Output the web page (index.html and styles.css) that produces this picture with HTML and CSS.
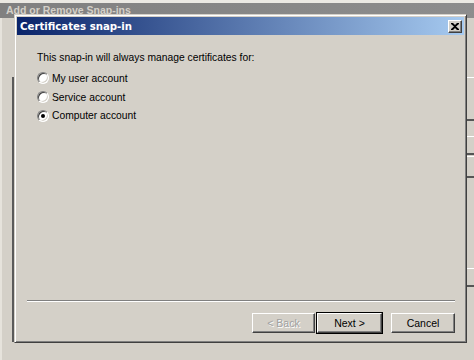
FILE: index.html
```html
<!DOCTYPE html>
<html lang="en">
<head>
    <meta charset="UTF-8">
    <meta name="viewport" content="width=device-width, initial-scale=1.0">
    <title>Certificates snap-in</title>
    <link rel="stylesheet" href="styles.css">
</head>
<body>
    <div class="desktop">
        <!-- Background window, mostly hidden behind the dialog -->
        <div class="outer-window">
            <div class="outer-title">Add or Remove Snap-ins</div>
            <div class="outer-body">
                <div class="outer-list"></div>
                <div class="outer-side">
                    <div class="side-btn side-btn-1"></div>
                    <div class="side-btn side-btn-2"></div>
                    <div class="side-btn side-btn-3"></div>
                    <div class="side-btn side-btn-4"></div>
                </div>
            </div>
        </div>

        <!-- Certificates snap-in dialog -->
        <div class="dialog">
            <div class="dialog-title">
                <span>Certificates snap-in</span>
                <button class="close-button" type="button">
                    <svg width="8" height="7" viewBox="0 0 8 7">
                        <path d="M0 0h2l2 2 2-2h2v1L5 3.5 8 6v1H6L4 5 2 7H0V6l3-2.5L0 1z" fill="#000"/>
                    </svg>
                </button>
            </div>
            <div class="dialog-body">
                <p class="prompt">This snap-in will always manage certificates for:</p>
                <label class="radio-row">
                    <span class="radio"></span>
                    <span>My user account</span>
                </label>
                <label class="radio-row">
                    <span class="radio"></span>
                    <span>Service account</span>
                </label>
                <label class="radio-row">
                    <span class="radio checked"></span>
                    <span>Computer account</span>
                </label>
            </div>
            <div class="separator"></div>
            <div class="button-row">
                <button class="btn back" type="button" disabled>&lt; Back</button>
                <button class="btn next default" type="button">Next &gt;</button>
                <button class="btn cancel" type="button">Cancel</button>
            </div>
        </div>
    </div>
</body>
</html>
```

FILE: styles.css
```css
/* styles.css */
body {
    margin: 0;
    padding: 0;
    font-family: "Liberation Sans", Arial, sans-serif;
    font-size: 10.3px;
    color: #000;
    background-color: #ebe9e3;
}

.desktop {
    position: relative;
    width: 474px;
    height: 360px;
    overflow: hidden;
}

/* ---- background window ---- */
.outer-window {
    position: absolute;
    left: 0;
    top: 3px;
    width: 520px;
    height: 380px;
    background-color: #d4d0c8;
    box-shadow: inset 2px 0 #e6e3dc;
}

.outer-title {
    height: 15px;
    padding-left: 6px;
    background: linear-gradient(to right, #808080, #8e8e8e);
    color: #d4d0c8;
    font-family: "Liberation Sans", Arial, sans-serif;
    font-weight: bold;
    font-size: 10.5px;
    line-height: 15px;
}

.outer-body {
    display: flex;
}

.outer-list {
    margin-top: 59px;
    margin-left: 12px;
    width: 2px;
    height: 265px;
    background-color: #5a5a5a;
}

.outer-side {
    margin-left: auto;
    width: 60px;
    padding-top: 59px;
    display: flex;
    flex-direction: column;
}

.side-btn {
    border-top: 1px solid #fff;
    border-bottom: 2px solid #555;
}

.side-btn-1 { height: 41px; }
.side-btn-2 { height: 16px; margin-top: 15px; }
.side-btn-3 { height: 19px; margin-top: 1px; }
.side-btn-4 { height: 16px; margin-top: 90px; }

/* ---- dialog ---- */
.dialog {
    position: absolute;
    left: 14px;
    top: 14px;
    width: 453px;
    height: 329px;
    box-sizing: border-box;
    padding: 2px;
    background-color: #d4d0c8;
    border: 1px solid;
    border-color: #d4d0c8 #404040 #404040 #d4d0c8;
    box-shadow: inset 1px 1px #fff, inset -1px -1px #808080;
    display: flex;
    flex-direction: column;
}

.dialog-title {
    height: 18px;
    display: flex;
    align-items: center;
    justify-content: space-between;
    padding: 0 2px 0 3px;
    background: linear-gradient(to right, #0a246a, #a6caf0);
    color: #fff;
    font-family: "DejaVu Sans", Verdana, sans-serif;
    font-weight: bold;
    font-size: 10.2px;
}

.close-button {
    width: 14px;
    height: 13px;
    padding: 0;
    display: flex;
    align-items: center;
    justify-content: center;
    background-color: #d4d0c8;
    border: 1px solid;
    border-color: #fff #404040 #404040 #fff;
    box-shadow: inset -1px -1px #808080;
}

.dialog-body {
    flex: 1;
    padding: 16px 0 0 20px;
}

.prompt {
    margin: 0 0 4px 0;
    line-height: 14px;
}

.radio-row {
    display: flex;
    align-items: center;
    gap: 3px;
    height: 18.7px;
}

.radio {
    width: 10px;
    height: 10px;
    border-radius: 50%;
    border: 1px solid;
    border-color: #808080 #fff #fff #808080;
    box-shadow: inset 1px 1px #404040, inset -1px -1px #d4d0c8;
    background-color: #fff;
    display: flex;
    align-items: center;
    justify-content: center;
}

.radio.checked::after {
    content: "";
    width: 4px;
    height: 4px;
    border-radius: 50%;
    background-color: #000;
}

.separator {
    margin: 0 9px 0 10px;
    border-top: 1px solid #808080;
    border-bottom: 1px solid #fff;
}

.button-row {
    display: flex;
    justify-content: flex-end;
    padding: 11px 9px 7px 0;
}

.btn {
    width: 63px;
    height: 20px;
    padding: 0;
    font-family: "Liberation Sans", Arial, sans-serif;
    font-size: 10.5px;
    color: #000;
    background-color: #d4d0c8;
    border: 1px solid;
    border-color: #fff #404040 #404040 #fff;
    box-shadow: inset -1px -1px #808080;
}

.btn.back {
    color: #a0a0a0;
    text-shadow: 1px 1px #fff;
}

.btn.next {
    width: 65px;
    margin-left: 2px;
}

.btn.default {
    outline: 1px solid #000;
    outline-offset: 0;
}

.btn.cancel {
    width: 64px;
    margin-left: 9px;
}
```
